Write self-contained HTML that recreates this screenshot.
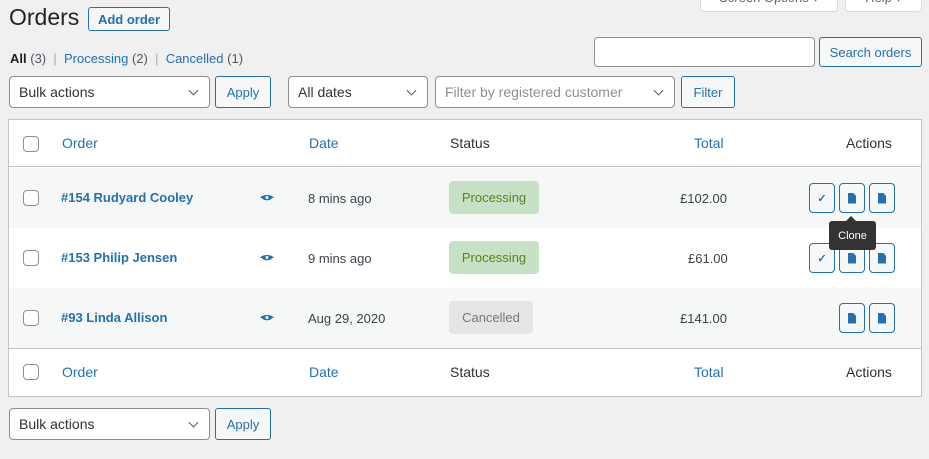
<!DOCTYPE html>
<html><head><style>
*{box-sizing:border-box}
body{margin:0;width:929px;height:459px;background:#f0f0f1;font-family:"Liberation Sans",sans-serif;font-size:13px;color:#3c434a;position:relative;overflow:hidden}
.a{position:absolute}
.btn{position:absolute;border:1px solid #2271b1;border-radius:3px;color:#2271b1;background:#f6f7f7;font-size:13px;display:flex;align-items:center;justify-content:center}
.sel{position:absolute;border:1px solid #8c8f94;border-radius:4px;background:#fff;font-size:14px;padding-left:9px;display:flex;align-items:center;color:#2c3338}
.sel:after{content:"";position:absolute;right:12px;top:50%;width:6px;height:6px;border-right:1.5px solid #50575e;border-bottom:1.5px solid #50575e;transform:translateY(-70%) rotate(45deg)}
.link{color:#2271b1}
.cb{position:absolute;left:23px;width:16px;height:16px;border:1px solid #8c8f94;border-radius:4px;background:#fff}
.row{position:absolute;left:9px;width:912px}
.st{position:absolute;left:449px;height:33px;border-radius:4px;display:flex;align-items:center;justify-content:center;font-size:13px}
.ab{position:absolute;width:26px;height:30px;border:1px solid #2271b1;border-radius:4px;background:#f6f7f7;display:flex;align-items:center;justify-content:center}
.doc{width:8px;height:11px;background:#2271b1;clip-path:polygon(0 0,60% 0,100% 30%,100% 100%,0 100%)}
.eye{position:absolute;left:260px}
</style></head><body>
<div class="a" style="left:9px;top:4px;font-size:23px;color:#1d2327">Orders</div>
<div class="btn" style="left:88px;top:7px;width:82px;height:24px;font-weight:bold;font-size:13px">Add order</div>
<div class="a" style="left:700px;top:-10px;width:138px;height:22px;border:1px solid #dcdcde;background:#fff;border-radius:0 0 4px 4px;font-size:13px;color:#646970;text-align:center;line-height:14px">Screen Options ▾</div>
<div class="a" style="left:845px;top:-10px;width:77px;height:22px;border:1px solid #dcdcde;background:#fff;border-radius:0 0 4px 4px;font-size:13px;color:#646970;text-align:center;line-height:14px">Help ▾</div>
<div class="a" style="left:10px;top:51px;font-size:13px"><b style="color:#1d2327">All</b> <span style="color:#50575e">(3)</span> <span style="color:#a7aaad">&nbsp;|&nbsp;</span> <span class="link">Processing</span> <span style="color:#50575e">(2)</span> <span style="color:#a7aaad">&nbsp;|&nbsp;</span> <span class="link">Cancelled</span> <span style="color:#50575e">(1)</span></div>
<div class="a" style="left:594px;top:37px;width:221px;height:30px;border:1px solid #8c8f94;border-radius:4px;background:#fff"></div>
<div class="btn" style="left:819px;top:37px;width:103px;height:30px">Search orders</div>
<div class="sel" style="left:9px;top:76px;width:201px;height:32px">Bulk actions</div>
<div class="btn" style="left:215px;top:76px;width:56px;height:32px">Apply</div>
<div class="sel" style="left:288px;top:76px;width:140px;height:32px">All dates</div>
<div class="sel" style="left:435px;top:76px;width:240px;height:32px;color:#8c8f94">Filter by registered customer</div>
<div class="btn" style="left:681px;top:76px;width:54px;height:32px">Filter</div>

<div class="a" style="left:8px;top:119px;width:914px;height:278px;border:1px solid #c3c4c7;background:#fff"></div>
<div class="row" style="top:120px;height:47px;border-bottom:1px solid #c3c4c7;background:#fff"></div>
<div class="row" style="top:168px;height:60px;background:#f6f7f7"></div>
<div class="row" style="top:228px;height:60px;background:#fff"></div>
<div class="row" style="top:288px;height:60px;background:#f6f7f7"></div>
<div class="row" style="top:348px;height:48px;border-top:1px solid #c3c4c7;background:#fff"></div>

<div class="cb" style="top:136px"></div>
<div class="a link" style="left:62px;top:135px;font-size:14px">Order</div>
<div class="a link" style="left:309px;top:135px;font-size:14px">Date</div>
<div class="a" style="left:450px;top:135px;font-size:14px;color:#2c3338">Status</div>
<div class="a link" style="left:694px;top:135px;font-size:14px">Total</div>
<div class="a" style="left:846px;top:135px;font-size:14px;color:#2c3338">Actions</div>

<svg class="eye a" style="top:193px" width="14" height="9" viewBox="0 0 14 9"><path d="M0 5C2 1 12 1 14 5L12 5C11 8 3 8 2 5Z" fill="#2271b1"/><circle cx="7" cy="4.5" r="1.5" fill="#f6f7f7"/></svg>
<svg class="eye a" style="top:253px" width="14" height="9" viewBox="0 0 14 9"><path d="M0 5C2 1 12 1 14 5L12 5C11 8 3 8 2 5Z" fill="#2271b1"/><circle cx="7" cy="4.5" r="1.5" fill="#fff"/></svg>
<svg class="eye a" style="top:313px" width="14" height="9" viewBox="0 0 14 9"><path d="M0 5C2 1 12 1 14 5L12 5C11 8 3 8 2 5Z" fill="#2271b1"/><circle cx="7" cy="4.5" r="1.5" fill="#f6f7f7"/></svg>

<div class="cb" style="top:190px"></div>
<div class="a link" style="left:61px;top:190px;font-weight:bold">#154 Rudyard Cooley</div>
<div class="a" style="left:308px;top:191px">8 mins ago</div>
<div class="st" style="top:181px;width:90px;background:#c6e1c6;color:#5b841b">Processing</div>
<div class="a" style="left:680px;top:191px">£102.00</div>
<div class="ab" style="left:809px;top:183px;color:#2271b1;font-size:11px;font-weight:bold">✓</div>
<div class="ab" style="left:839px;top:183px"><div class="doc"></div></div>
<div class="ab" style="left:869px;top:183px"><div class="doc"></div></div>

<div class="cb" style="top:250px"></div>
<div class="a link" style="left:61px;top:250px;font-weight:bold">#153 Philip Jensen</div>
<div class="a" style="left:308px;top:251px">9 mins ago</div>
<div class="st" style="top:241px;width:90px;background:#c6e1c6;color:#5b841b">Processing</div>
<div class="a" style="left:688px;top:251px">£61.00</div>
<div class="ab" style="left:809px;top:243px;color:#2271b1;font-size:11px;font-weight:bold">✓</div>
<div class="ab" style="left:839px;top:243px"><div class="doc"></div></div>
<div class="ab" style="left:869px;top:243px"><div class="doc"></div></div>

<div class="cb" style="top:310px"></div>
<div class="a link" style="left:61px;top:310px;font-weight:bold">#93 Linda Allison</div>
<div class="a" style="left:308px;top:311px">Aug 29, 2020</div>
<div class="st" style="top:301px;width:84px;background:#e5e5e5;color:#777">Cancelled</div>
<div class="a" style="left:680px;top:311px">£141.00</div>
<div class="ab" style="left:839px;top:303px"><div class="doc"></div></div>
<div class="ab" style="left:869px;top:303px"><div class="doc"></div></div>

<div class="a" style="left:829px;top:221px;width:47px;height:29px;background:#333;color:#fff;border-radius:3px;font-size:11px;display:flex;align-items:center;justify-content:center">Clone</div>
<div class="a" style="left:846px;top:216px;width:0;height:0;border:5px solid transparent;border-bottom-color:#333;border-top:0"></div>

<div class="cb" style="top:364px"></div>
<div class="a link" style="left:62px;top:364px;font-size:14px">Order</div>
<div class="a link" style="left:309px;top:364px;font-size:14px">Date</div>
<div class="a" style="left:450px;top:364px;font-size:14px;color:#2c3338">Status</div>
<div class="a link" style="left:694px;top:364px;font-size:14px">Total</div>
<div class="a" style="left:846px;top:364px;font-size:14px;color:#2c3338">Actions</div>

<div class="sel" style="left:9px;top:408px;width:201px;height:32px">Bulk actions</div>
<div class="btn" style="left:215px;top:408px;width:56px;height:32px">Apply</div>
</body></html>
